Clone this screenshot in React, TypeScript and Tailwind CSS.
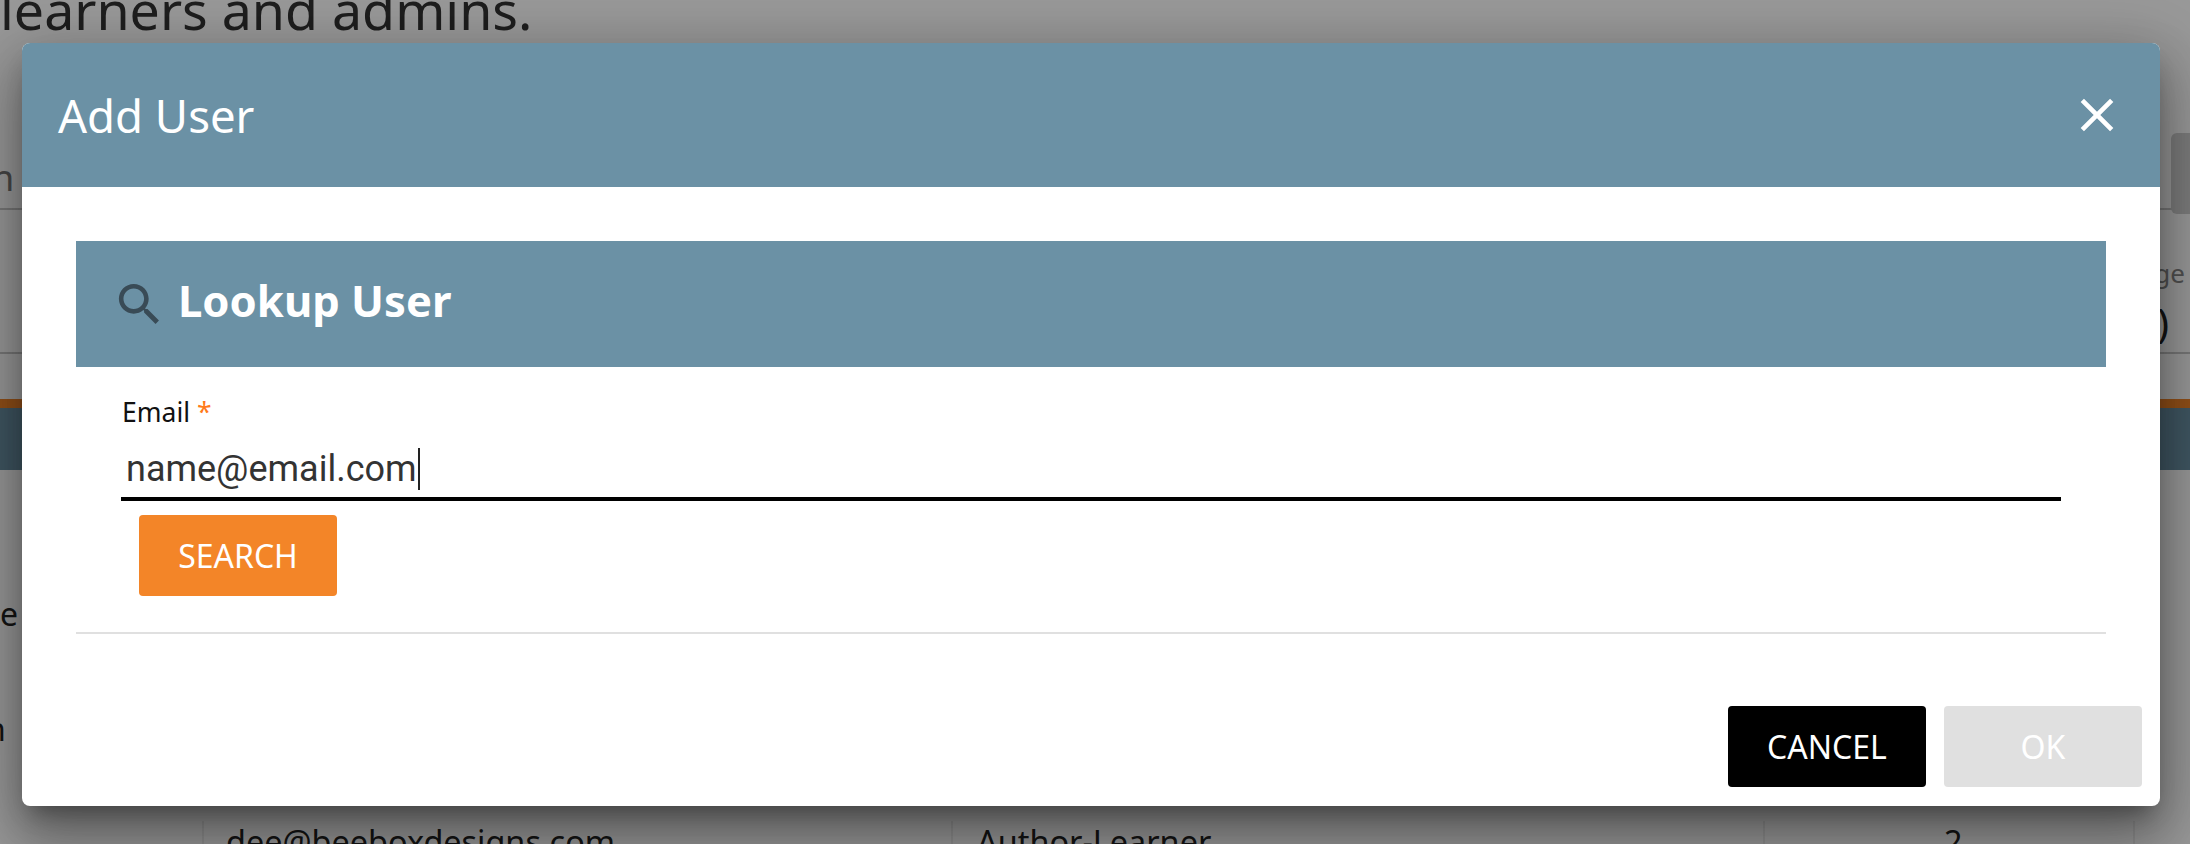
const noto = "font-['Noto_Sans','Open_Sans',sans-serif]";

const BackdropPage = () => {
  return (
    <div className={`${noto} flex h-[844px] w-[2190px] flex-col overflow-hidden bg-white text-[#333]`}>
      <div className="h-[48px] shrink-0">
        <h1 className="-mt-[21px] text-[53.7px] leading-[62px] font-normal">learners and admins.</h1>
      </div>

      <div className="flex h-[162px] shrink-0 items-end justify-between border-b-2 border-[#c8c8c8]">
        <span className="pb-[8px] -ml-[8px] text-[36px] leading-[44px] text-[#777]">n</span>
        <div className="-mb-[6px] h-[81px] w-[19px] rounded-l-md bg-[#d0d0d0]" />
      </div>

      <div className="flex h-[144px] shrink-0 flex-col items-end border-b-2 border-[#c8c8c8] pt-[48px] pr-[5px]">
        <span className="text-[26px] leading-[30px] text-[#888]">ge</span>
        <span className="mt-[15px] pr-[16px] text-[40px] leading-[40px] text-[#222]">)</span>
      </div>

      <div className="mt-[45px] h-[9px] shrink-0 bg-[#f38528]" />
      <div className="h-[62px] shrink-0 bg-[#6b91a5]" />

      <div className="flex h-[164px] shrink-0 items-end text-[32px] leading-[40px] text-[#222]">
        <span>e</span>
      </div>
      <div className="flex h-[115px] shrink-0 items-end text-[32px] leading-[40px] text-[#222]">
        <span className="-ml-[14px]">n</span>
      </div>

      <div className="grid shrink-0 grid-cols-[202px_749px_812px_370px_57px] pt-[72px] text-[32.4px] leading-[40px] text-[#222]">
        <div />
        <div className="border-l-2 border-[#eee] pl-[22px]">dee@beeboxdesigns.com</div>
        <div className="border-l-2 border-[#eee] pl-[24px]">Author-Learner</div>
        <div className="border-l-2 border-[#eee] pl-[179px]">2</div>
        <div className="border-l-2 border-[#eee]" />
      </div>
    </div>
  );
};

const AddUserDialog = () => {
  return (
    <div
      className={`${noto} absolute top-[43px] left-[22px] flex h-[763px] w-[2138px] flex-col overflow-hidden rounded-[8px] bg-white shadow-[0_15px_21px_-10px_rgba(0,0,0,0.35),0_34px_53px_4px_rgba(0,0,0,0.25),0_13px_64px_11px_rgba(0,0,0,0.2)]`}
    >
      <div className="flex h-[144px] shrink-0 items-center justify-between bg-[#6b91a5] pr-[35px] pl-[36px] text-white">
        <h2 className="text-[45.5px] leading-[60px] font-normal">Add User</h2>
        <svg viewBox="0 0 24 24" className="h-[56px] w-[56px] fill-white">
          <path d="M19 6.41L17.59 5 12 10.59 6.41 5 5 6.41 10.59 12 5 17.59 6.41 19 12 13.41 17.59 19 19 17.59 13.41 12z" />
        </svg>
      </div>

      <div className="flex flex-1 flex-col px-[54px] pt-[54px]">
        <div className="flex h-[126px] shrink-0 items-center gap-[11px] bg-[#6b91a5] pl-[36px]">
          <svg viewBox="0 0 24 24" className="h-[55px] w-[55px] fill-[#394b56]">
            <path d="M15.5 14h-.79l-.28-.27C15.41 12.59 16 11.11 16 9.5 16 5.91 13.09 3 9.5 3S3 5.91 3 9.5 5.91 16 9.5 16c1.61 0 3.09-.59 4.23-1.57l.27.28v.79l5 4.99L20.49 19l-4.99-5zm-6 0C7.01 14 5 11.99 5 9.5S7.01 5 9.5 5 14 7.01 14 9.5 11.99 14 9.5 14z" />
          </svg>
          <h3 className="-mt-[8px] text-[43.6px] leading-[56px] font-bold text-white">Lookup User</h3>
        </div>

        <div className="flex flex-col px-[45px] pt-[27px]">
          <label className="pl-[1px] text-[26.5px] leading-[36px] text-[#111]">
            Email <span className="text-[#ff7a1a]">*</span>
          </label>
          <div className="mt-[10px] flex h-[61px] items-center border-b-4 border-black pl-[5px] font-['Roboto',sans-serif] text-[36px] leading-[42px] text-[#333]">
            <span>name@email.com</span>
            <span className="ml-px h-[42px] w-[2px] bg-[#222]" />
          </div>
          <button className="mt-[14px] ml-[18px] h-[81px] w-[198px] rounded-[4px] bg-[#f38528] text-[32px] text-white uppercase">
            Search
          </button>
        </div>

        <div className="mt-[36px] h-[2px] shrink-0 bg-[#e0e0e0]" />

        <div className="mt-auto -mr-[36px] flex justify-end gap-[18px] pb-[19px]">
          <button className="h-[81px] w-[198px] rounded-[4px] bg-black text-[32px] text-white uppercase">Cancel</button>
          <button className="h-[81px] w-[198px] rounded-[4px] bg-[#e0e0e0] text-[32px] text-white uppercase">OK</button>
        </div>
      </div>
    </div>
  );
};

export default function App() {
  return (
    <div className="relative h-[844px] w-[2190px] overflow-hidden">
      <BackdropPage />
      <div className="absolute inset-0 bg-black/40" />
      <AddUserDialog />
    </div>
  );
}
